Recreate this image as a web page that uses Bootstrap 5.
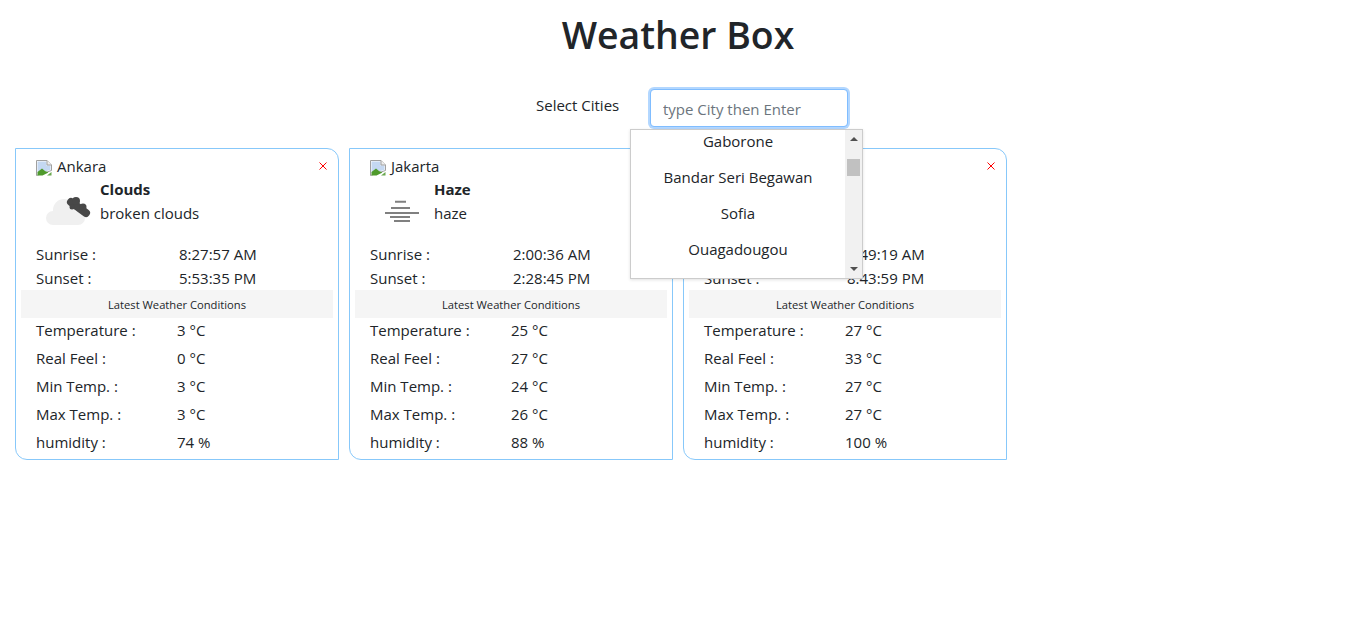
<!DOCTYPE html>
<html lang="en">
<head>
<meta charset="utf-8">
<title>Weather Box</title>
<link rel="stylesheet" href="https://cdn.jsdelivr.net/npm/bootstrap@5.3.0/dist/css/bootstrap.min.css">
<style>
body{font-family:"Open Sans","Noto Sans","Liberation Sans",sans-serif;font-size:15px;color:#212529;background:#fff;line-height:24px}
.wb-title{font-size:37.4px;font-weight:600;line-height:48px;margin:11px 0 0 7px;text-align:center}
.wb-bar{height:38px;margin-top:30px;margin-left:536px;gap:29px}
.wb-label{font-size:15px;width:85px;white-space:nowrap;margin-top:-7px}
.wb-field{width:198px;height:38px}
.wb-input.form-control,.wb-input.form-control:focus{height:38px;font-size:15px;padding:2px 12px 0;color:#495057;border:1px solid #80bdff;border-radius:4px;box-shadow:0 0 0 2px #b3d7ff;font-family:inherit}
.wb-input::placeholder{color:#6c757d;opacity:1}
.wb-drop{position:absolute;z-index:5;top:40px;left:-20px;width:233px;height:150px;background:#fff;border:1px solid #ccc;box-shadow:0 1px 3px rgba(0,0,0,.12);overflow:hidden}
.wb-items{width:214px;margin-top:-7px;text-align:center}
.wb-item{height:36px;line-height:36px;white-space:nowrap}
.wb-track{width:17px;height:148px;background:#f1f1f1;padding-left:2px;flex:none}
.wb-thumb{width:13px;height:17px;background:#c1c1c1;margin-top:29px}
.wb-up,.wb-down{position:absolute;right:4px;width:0;height:0;border-left:4px solid transparent;border-right:4px solid transparent}
.wb-up{top:7px;border-bottom:4px solid #505050}
.wb-down{bottom:7px;border-top:4px solid #505050}
.wb-cards{gap:10px;margin:21px 0 0 15px}
.wb-card.card{width:324px;height:312px;flex:none;border:1px solid #87c8fa;border-radius:0 12px 0 12px;padding:5px 5px 0;background:#fff;--bs-card-border-width:1px}
.wb-city{height:24px;padding-left:15px;gap:5px;position:relative}
.wb-broken{width:16px;height:16px;flex:none;margin-top:6px}
.wb-close{position:absolute;right:6px;top:8px;width:8px;height:8px;display:block}
.wb-cond{height:48px;margin-bottom:16px}
.wb-ico{width:79px;height:48px;flex:none;display:block;margin-top:1px}
.wb-txt{margin-top:-1px}
.wb-main{font-weight:700}
.wb-sun{height:24px}
.wb-lab{padding-left:15px}
.wb-val{padding-left:2px}
.wb-band{background:#f5f5f5;height:28px;line-height:30px;font-size:11.2px;text-align:center}
.wb-stat{height:28px;line-height:25px}
</style>
</head>
<body>
<h1 class="wb-title">Weather Box</h1>
<div class="wb-bar d-flex align-items-center">
  <div class="wb-label">Select Cities</div>
  <div class="wb-field position-relative">
    <input class="wb-input form-control" type="text" placeholder="type City then Enter">
    <div class="wb-drop d-flex">
      <div class="wb-items">
        <div class="wb-item">Gaborone</div>
        <div class="wb-item">Bandar Seri Begawan</div>
        <div class="wb-item">Sofia</div>
        <div class="wb-item">Ouagadougou</div>
      </div>
      <div class="wb-track">
        <div class="wb-up"></div>
        <div class="wb-thumb"></div>
        <div class="wb-down"></div>
      </div>
    </div>
  </div>
</div>

<div class="wb-cards d-flex">
  <div class="wb-card card">
    <div class="wb-city d-flex">
      <svg class="wb-broken" viewBox="0 0 16 16"><path d="M.5.5H11L15.500 5v5.500L.5 15.500z" fill="#fff" stroke="#a0a0a0"/><path d="M1.500 1.500h9v4h4v4.500L1.500 13z" fill="#c4d8f2"/><path d="M1.500 15.500V12L6 8.500l3 2.500 3.500 1.500-6 3z" fill="#4f9a2c"/><path d="M11 .5V5h4.500" fill="#eee" stroke="#a0a0a0"/><path d="M11 15.500h4.500V12z" fill="#6aa84f"/></svg>
      <span>Ankara</span>
      <svg class="wb-close" viewBox="0 0 8 8"><path d="M.5.5l7 7M7.500.5l-7 7" stroke="#f00" stroke-width="1"/></svg>
    </div>
    <div class="wb-cond d-flex">
      <svg class="wb-ico" viewBox="0 0 79 48"><g fill="#f0f0f0"><circle cx="32" cy="39" r="7"/><circle cx="43" cy="31" r="11"/><circle cx="57" cy="39" r="7"/><rect x="32" y="34" width="25" height="12"/></g><g fill="#484848" stroke="#484848"><path d="M50 23 65 34" stroke-width="8" stroke-linecap="round"/><circle cx="55" cy="22" r="4" stroke="none"/><circle cx="62" cy="28" r="3.500" stroke="none"/><circle cx="51" cy="28" r="2.500" stroke="none"/></g></svg>
      <div class="wb-txt"><div class="wb-main">Clouds</div><div>broken clouds</div></div>
    </div>
    <div class="row g-0 wb-sun"><div class="col-6 wb-lab">Sunrise :</div><div class="col-6 wb-val">8:27:57 AM</div></div>
    <div class="row g-0 wb-sun"><div class="col-6 wb-lab">Sunset :</div><div class="col-6 wb-val">5:53:35 PM</div></div>
    <div class="wb-band">Latest Weather Conditions</div>
    <div class="row g-0 wb-stat"><div class="col-6 wb-lab">Temperature :</div><div class="col-6">3 °C</div></div>
    <div class="row g-0 wb-stat"><div class="col-6 wb-lab">Real Feel :</div><div class="col-6">0 °C</div></div>
    <div class="row g-0 wb-stat"><div class="col-6 wb-lab">Min Temp. :</div><div class="col-6">3 °C</div></div>
    <div class="row g-0 wb-stat"><div class="col-6 wb-lab">Max Temp. :</div><div class="col-6">3 °C</div></div>
    <div class="row g-0 wb-stat"><div class="col-6 wb-lab">humidity :</div><div class="col-6">74 %</div></div>
  </div>

  <div class="wb-card card">
    <div class="wb-city d-flex">
      <svg class="wb-broken" viewBox="0 0 16 16"><path d="M.5.5H11L15.500 5v5.500L.5 15.500z" fill="#fff" stroke="#a0a0a0"/><path d="M1.500 1.500h9v4h4v4.500L1.500 13z" fill="#c4d8f2"/><path d="M1.500 15.500V12L6 8.500l3 2.500 3.500 1.500-6 3z" fill="#4f9a2c"/><path d="M11 .5V5h4.500" fill="#eee" stroke="#a0a0a0"/><path d="M11 15.500h4.500V12z" fill="#6aa84f"/></svg>
      <span>Jakarta</span>
    </div>
    <div class="wb-cond d-flex">
      <svg class="wb-ico" viewBox="0 0 79 48"><g stroke="#808080" stroke-width="2"><path d="M40 22.700h11M36 29h19M30 34h34M35 38h20M39 42h16"/></g></svg>
      <div class="wb-txt"><div class="wb-main">Haze</div><div>haze</div></div>
    </div>
    <div class="row g-0 wb-sun"><div class="col-6 wb-lab">Sunrise :</div><div class="col-6 wb-val">2:00:36 AM</div></div>
    <div class="row g-0 wb-sun"><div class="col-6 wb-lab">Sunset :</div><div class="col-6 wb-val">2:28:45 PM</div></div>
    <div class="wb-band">Latest Weather Conditions</div>
    <div class="row g-0 wb-stat"><div class="col-6 wb-lab">Temperature :</div><div class="col-6">25 °C</div></div>
    <div class="row g-0 wb-stat"><div class="col-6 wb-lab">Real Feel :</div><div class="col-6">27 °C</div></div>
    <div class="row g-0 wb-stat"><div class="col-6 wb-lab">Min Temp. :</div><div class="col-6">24 °C</div></div>
    <div class="row g-0 wb-stat"><div class="col-6 wb-lab">Max Temp. :</div><div class="col-6">26 °C</div></div>
    <div class="row g-0 wb-stat"><div class="col-6 wb-lab">humidity :</div><div class="col-6">88 %</div></div>
  </div>

  <div class="wb-card card">
    <div class="wb-city d-flex">
      <svg class="wb-close" viewBox="0 0 8 8"><path d="M.5.5l7 7M7.500.5l-7 7" stroke="#f00" stroke-width="1"/></svg>
    </div>
    <div class="wb-cond d-flex"></div>
    <div class="row g-0 wb-sun"><div class="col-6 wb-lab">Sunrise :</div><div class="col-6 wb-val">6:49:19 AM</div></div>
    <div class="row g-0 wb-sun"><div class="col-6 wb-lab">Sunset :</div><div class="col-6 wb-val">8:43:59 PM</div></div>
    <div class="wb-band">Latest Weather Conditions</div>
    <div class="row g-0 wb-stat"><div class="col-6 wb-lab">Temperature :</div><div class="col-6">27 °C</div></div>
    <div class="row g-0 wb-stat"><div class="col-6 wb-lab">Real Feel :</div><div class="col-6">33 °C</div></div>
    <div class="row g-0 wb-stat"><div class="col-6 wb-lab">Min Temp. :</div><div class="col-6">27 °C</div></div>
    <div class="row g-0 wb-stat"><div class="col-6 wb-lab">Max Temp. :</div><div class="col-6">27 °C</div></div>
    <div class="row g-0 wb-stat"><div class="col-6 wb-lab">humidity :</div><div class="col-6">100 %</div></div>
  </div>
</div>
<script src="https://cdn.jsdelivr.net/npm/bootstrap@5.3.0/dist/js/bootstrap.bundle.min.js"></script>
</body>
</html>
